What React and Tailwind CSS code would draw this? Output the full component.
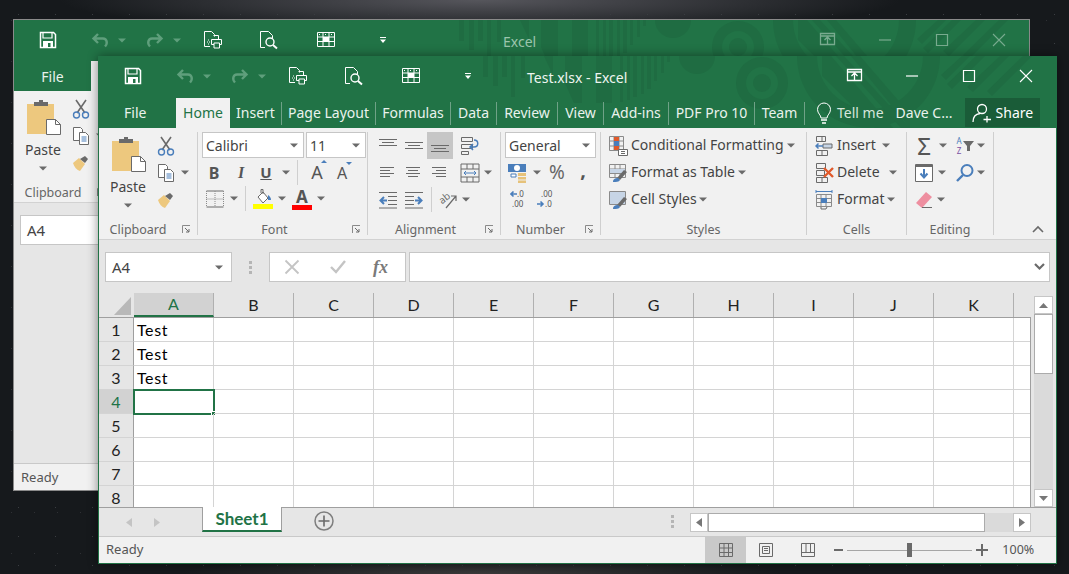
import React from 'react';

const GREEN = '#217346';

function Caret({ color = '#6a6a6a', className = '' }) {
  return (
    <svg width="8" height="5" viewBox="0 0 8 5" className={`shrink-0 ${className}`}>
      <path d="M0 0.5h8L4 4.5z" fill={color} />
    </svg>
  );
}

function Sep({ className = '' }) {
  return <div className={`w-px h-[25px] bg-[#cfcfcf] shrink-0 ${className}`} />;
}

function Ico({ w = 20, h = 20, className = '', children }) {
  return (
    <svg width={w} height={h} viewBox={`0 0 ${w} ${h}`} fill="none" className={`shrink-0 ${className}`}>
      {children}
    </svg>
  );
}

/* title bar drawings */
function SaveIcon() {
  return (
    <Ico>
      <path d="M2.5 2.5h13l2 2v13h-15z" stroke="#fff" strokeWidth="1.5" />
      <path d="M5 3v5h9V3" stroke="#fff" strokeWidth="1.2" />
      <path d="M5 11h10v6H5z" fill="#fff" />
      <path d="M10 13h2.5v4H10z" fill={GREEN} />
    </Ico>
  );
}
function UndoIcon({ flip }) {
  return (
    <Ico className={flip ? '-scale-x-100' : ''}>
      <path d="M7 4L2.5 8.5 7 13M3 8.5h9c4 0 5 5 2 8" stroke="#5f9f7c" strokeWidth="2.4" />
    </Ico>
  );
}
function PrintDocIcon() {
  return (
    <Ico>
      <path d="M7 16.5H1.5v-15h7l3 3v2" stroke="#fff" />
      <path d="M10.5 5.5h5v3.5M8.5 9.5h10v5h-10z" stroke="#fff" />
      <path d="M11 13h5.5v5H11z" fill={GREEN} stroke="#fff" />
      <path d="M5 10h1M4 12h1M6 12h1M5 14h1" stroke="#fff" />
    </Ico>
  );
}
function SearchDocIcon() {
  return (
    <Ico>
      <path d="M6 17.5H1.5v-16h8l4 4v3" stroke="#fff" />
      <circle cx="11" cy="12" r="4" stroke="#fff" strokeWidth="1.4" />
      <path d="M14 15l4 3.5" stroke="#fff" strokeWidth="2" />
    </Ico>
  );
}
function TableDotIcon() {
  return (
    <Ico>
      <path d="M1.5 2.5h17v14h-17zM1.5 7h17M1.5 11.5h17M7 2.5v14M13 2.5v14" stroke="#fff" />
      <path d="M7 7h6v4.5H7z" fill="#fff" />
      <path d="M3 4.5h2M9 4.5h2M15 4.5h2" stroke="#fff" strokeDasharray="1 1" />
    </Ico>
  );
}
function CustomizeIcon() {
  return (
    <svg width="8" height="8" viewBox="0 0 8 8" className="shrink-0">
      <path d="M1 1h6M1 3.5h6L4 7z" stroke="none" fill="#fff" />
      <path d="M1 1.5h6" stroke="#fff" />
    </svg>
  );
}

function Pattern({ className }) {
  const bars = [
    [483, 5, 77], [493, 5, 86], [502, 5, 77], [511, 4, 97], [521, 4, 78],
    [620, 3, 102], [627, 3, 100], [633, 4, 97], [641, 3, 94], [647, 4, 89], [654, 3, 81], [661, 3, 73], [667, 3, 62],
  ];
  return (
    <svg viewBox="470 56 580 72" width="580" height="72" className={`absolute top-0 ${className}`} fill="#1f6c42">
      {bars.map(([x, w, y]) => <rect key={x} x={x} y="56" width={w} height={y - 56} />)}
      <path d="M544 56h9v19zM565 56h17v47h-8l-9-20zM596 56h16v47h-16z" />
      <path d="M679 56a18 18 0 0 0 36 0z" />
      <path fillRule="evenodd" d="M736 83a26 26 0 1 1 52 0a26 26 0 1 1-52 0zM746 83a16 16 0 1 0 32 0a16 16 0 1 0-32 0zM753 83a9 9 0 1 1 18 0a9 9 0 1 1-18 0z" />
      <path d="M797 56a71 71 0 0 0 143 0h-17a53 53 0 0 1-106 0z" />
      <path d="M822 56h9l62 72h-18l-53-52zM836 56h8l66 72h-9zM851 56h9l50 58v14z" />
      <path d="M962 56h8l-24 24-5-5zM976 56h9l-33 33-5-5zM1000 56h9l-36 36-6-5zM1023 56h9l-40 40-5-5z" />
    </svg>
  );
}

function TitleBar({ title, titleClass, dim }) {
  const strokeColor = dim ? '#79ab8f' : '#fff';
  return (
    <div className="relative flex items-center h-[38px] pl-[24px] pr-[20px] pt-[2px]">
      <SaveIcon />
      <div className="ml-[33px]"><UndoIcon /></div>
      <Caret color="#5f9f7c" className="ml-[7px]" />
      <div className="ml-[18px]"><UndoIcon flip /></div>
      <Caret color="#5f9f7c" className="ml-[9px]" />
      <div className="ml-[22px]"><PrintDocIcon /></div>
      <div className="ml-[36px]"><SearchDocIcon /></div>
      <div className="ml-[37px]"><TableDotIcon /></div>
      <div className="ml-[43px]"><CustomizeIcon /></div>
      <div className={`mt-[4px] text-[14px] leading-none ${dim ? 'text-[#9cc5ad]' : 'text-[#eef5f0]'} ${titleClass}`}>{title}</div>
      <div className="ml-auto flex items-center">
        <Ico>
          <path d="M3.5 3.5h14v11h-14zM3.5 6h14M10.5 14V7.5M7.5 10l3-3 3 3" stroke={strokeColor} strokeWidth="1.3" />
        </Ico>
        <Ico className="ml-[38px]"><path d="M4 10h12" stroke={strokeColor} strokeWidth="1.2" /></Ico>
        <Ico className="ml-[37px]"><path d="M4.5 4.5h11v11h-11z" stroke={strokeColor} strokeWidth="1.2" /></Ico>
        <Ico className="ml-[37px]"><path d="M4 4l12 12M16 4L4 16" stroke={strokeColor} strokeWidth="1.1" /></Ico>
      </div>
    </div>
  );
}

function PasteIcon() {
  return (
    <Ico w={36} h={36}>
      <path d="M1 4h27v30H1z" fill="#edc87e" />
      <path d="M8 2h5V0h4v2h5v4H8z" fill="#6a6a6a" />
      <path d="M20.5 19.5h9l5 5v10h-14z" fill="#fff" stroke="#6a6a6a" />
      <path d="M29.5 19.5v5h5" stroke="#6a6a6a" />
    </Ico>
  );
}
function CutIcon() {
  return (
    <Ico w={18} h={20}>
      <path d="M4 1l9 13M14 1L5 14" stroke="#6a6a6a" strokeWidth="1.6" />
      <circle cx="4.5" cy="16" r="3" stroke="#4a7ebb" strokeWidth="1.4" />
      <circle cx="13.5" cy="16" r="3" stroke="#4a7ebb" strokeWidth="1.4" />
    </Ico>
  );
}
function CopyIcon() {
  return (
    <Ico w={18} h={20}>
      <path d="M1.5 1.5h7l2 2v11h-9z" fill="#fff" stroke="#6a6a6a" />
      <path d="M7.5 6.5h6l3 3v9h-9z" fill="#fff" stroke="#6a6a6a" />
      <path d="M9.5 11h5M9.5 13h5M9.5 15h5" stroke="#4a7ebb" />
    </Ico>
  );
}
function PainterIcon() {
  return (
    <Ico w={18} h={18}>
      <path d="M1 9l6-5 6 6-5 7C5 16 2 13 1 9z" fill="#edc87e" />
      <path d="M8 5l5-3 3 3-3 4z" fill="#6a6a6a" />
    </Ico>
  );
}
function BordersIcon() {
  return (
    <Ico w={18} h={18}>
      <path d="M0.5 1h17M0.5 17h17" stroke="#6a6a6a" />
      <path d="M0.5 1v16M17.5 1v16M9 1v16M0.5 9h17" stroke="#8a8a8a" strokeDasharray="1 1" />
    </Ico>
  );
}
function FillIcon() {
  return (
    <Ico h={22}>
      <path d="M5 9l5-5 5 6-5 5z" fill="#fff" stroke="#6a6a6a" />
      <path d="M8 5V1.5h2V6" stroke="#6a6a6a" />
      <path d="M15 7c2 1 3 3 3 5h-3z" fill="#4a7ebb" />
      <path d="M0 16h20v5H0z" fill="#ffff00" />
    </Ico>
  );
}
function Lines({ rows }) {
  return (
    <Ico w={18} h={16}>
      {rows.map(([a, b, y]) => <path key={y} d={`M${a} ${y + 0.5}H${b}`} stroke="#6a6a6a" />)}
    </Ico>
  );
}
const alignTop = [[0, 18, 1], [3, 15, 4], [0, 18, 7]];
const alignMid = [[0, 18, 4], [3, 15, 7], [0, 18, 10]];
const alignBot = [[0, 18, 7], [3, 15, 10], [0, 18, 13]];
const alignL = [[1, 15, 2], [1, 11, 5], [1, 15, 8], [1, 11, 11]];
const alignC = [[1, 15, 2], [3, 13, 5], [1, 15, 8], [3, 13, 11]];
const alignR = [[1, 15, 2], [5, 15, 5], [1, 15, 8], [5, 15, 11]];

function Indent({ flip }) {
  return (
    <Ico w={18} h={18} className={flip ? '-scale-x-100' : ''}>
      <path d="M0 1.5h18M9 5.5h9M9 9.5h9M9 13.5h9M0 17h18" stroke="#6a6a6a" />
      <path d="M8 9.5H2M5 6L1.5 9.5 5 13" stroke="#4a7ebb" strokeWidth="2" />
    </Ico>
  );
}
function WrapIcon() {
  return (
    <Ico h={20}>
      <path d="M1.5 1.5h11v4h-11zM1.5 8.5h11v4h-11zM1.5 15.5h7v3h-7z" stroke="#6a6a6a" />
      <path d="M14 4c5 0 5 7 0 7h-3M13 8l-3 3 3 3" stroke="#4a7ebb" strokeWidth="1.5" />
    </Ico>
  );
}
function MergeIcon() {
  return (
    <Ico h={20}>
      <path d="M1 1h18v18H1zM1 6h18M1 14h18M7 1v5M13 1v5M7 14v5M13 14v5" stroke="#6a6a6a" />
      <path d="M4 10h12M6 8l-2 2 2 2M14 8l2 2-2 2" stroke="#4a7ebb" />
    </Ico>
  );
}
function OrientIcon() {
  return (
    <Ico h={20} className="overflow-visible">
      <path d="M8 18L18 6M13 6h5v5" stroke="#6a6a6a" strokeWidth="1.2" />
      <text x="1" y="12" fontSize="10" fill="#6a6a6a" transform="rotate(-38 6 9)" fontFamily="Noto Sans">ab</text>
    </Ico>
  );
}
function CurrencyIcon() {
  return (
    <Ico h={20}>
      <path d="M0 1h18v8H0z" fill="#4a7ebb" />
      <circle cx="9" cy="5" r="3" fill="#fff" />
      <path d="M3 11h5v3H3z" fill="#fff" stroke="#4a7ebb" />
      <path d="M10 10h8v3h-8zM10 14h8v2.5h-8zM10 17.5h8V20h-8z" fill="#e6c27a" />
    </Ico>
  );
}
function DecimalIcon({ top, bottom, dir }) {
  return (
    <Ico w={18} h={20}>
      <text x={dir === 'l' ? 7 : 5} y="8" fontSize="8" fill="#555" fontFamily="Noto Sans">{top}</text>
      <text x={dir === 'l' ? 2 : 9} y="18" fontSize="8" fill="#555" fontFamily="Noto Sans">{bottom}</text>
      {dir === 'l'
        ? <path d="M7 5H1M3.5 2.5L1 5l2.5 2.5" stroke="#4a7ebb" strokeWidth="1.6" />
        : <path d="M1 15h6M4.5 12.5L7 15l-2.5 2.5" stroke="#4a7ebb" strokeWidth="1.6" />}
    </Ico>
  );
}
function CondIcon() {
  return (
    <Ico w={19} h={20}>
      <path d="M0.5 0.5h14v14h-14zM0.5 5h14M0.5 10h14M5 0.5v14M10 0.5v14" stroke="#8a8a8a" />
      <path d="M5 1h5v4H5z" fill="#e0592a" />
      <path d="M5 5h5v5H5z" fill="#4a7ebb" />
      <path d="M5 10h5v4H5z" fill="#e0592a" />
      <path d="M9.5 13.5h9v6h-9z" fill="#fff" stroke="#6a6a6a" />
      <path d="M12 15.5h4M12 17.5h4" stroke="#6a6a6a" />
    </Ico>
  );
}
function TableStyleIcon({ plain }) {
  return (
    <Ico w={19} h={20}>
      <path d="M0.5 1.5h16v13H0.5zM0.5 6h16M0.5 10.5h16M6 1.5v13M11 1.5v13" stroke="#8a8a8a" />
      {plain ? <path d="M1 2h15v12H1z" fill="#c7d5e6" /> : <path d="M1 6h15v4H1z" fill="#c7d5e6" />}
      <path d="M8 15l7-8 3 2-7 8z" fill="#6a6a6a" />
      <path d="M4 19c0-3 2-4 5-4l2 2c-1 2-4 2-7 2z" fill="#4a7ebb" />
    </Ico>
  );
}
function CellInsert() {
  return (
    <Ico w={18} h={20}>
      <path d="M1.5 0.5h9v5h-9zM7 5.5V0.5M1.5 14.5h11v5h-11zM7 14.5v5" stroke="#6a6a6a" />
      <path d="M8 8h9v4H8z" fill="#c7d5e6" stroke="#6a6a6a" />
      <path d="M8 10H1M3.5 7.5L1 10l2.5 2.5" stroke="#4a7ebb" strokeWidth="1.5" />
    </Ico>
  );
}
function CellDelete() {
  return (
    <Ico w={19} h={20}>
      <path d="M1.5 0.5h9v5h-9zM1.5 14.5h11v5h-11zM7 14.5v5M1.5 7.5h8v5h-8z" stroke="#6a6a6a" />
      <path d="M9 5l9 9M18 5l-9 9" stroke="#e0592a" strokeWidth="2.4" />
    </Ico>
  );
}
function CellFormat() {
  return (
    <Ico w={18} h={20}>
      <path d="M1 1.5h16M1 0v3M17 0v3" stroke="#4a7ebb" />
      <path d="M1.5 4.5h15v12h-15zM1.5 8.5h15M1.5 12.5h15M6 4.5v12M11 4.5v12" stroke="#8a8a8a" />
      <path d="M6 8h6v5H6z" fill="#4a7ebb" />
      <path d="M6 17v2h5M12 17l-1 2" stroke="#6a6a6a" />
    </Ico>
  );
}
function SortIcon() {
  return (
    <div className="flex items-center w-[20px] h-[20px]">
      <div className="flex flex-col items-center w-[8px] text-[8px] leading-[10px]">
        <span className="text-[#4a7ebb]">A</span>
        <span className="text-[#7b4ea3]">Z</span>
      </div>
      <Ico w={12} h={12}><path d="M0 1h11L7 6v5H4V6z" fill="#6a6a6a" /></Ico>
    </div>
  );
}
function FillDownIcon() {
  return (
    <Ico w={18} h={20}>
      <path d="M0.5 1.5h17v17H0.5z" fill="#fff" stroke="#6a6a6a" />
      <path d="M0.5 3h17" stroke="#6a6a6a" strokeWidth="2" />
      <path d="M9 6v8M5.5 10.5L9 14.5l3.5-4" stroke="#4a7ebb" strokeWidth="2" />
    </Ico>
  );
}
function FindIcon() {
  return (
    <Ico h={20}>
      <circle cx="12" cy="7.5" r="5.5" stroke="#4a7ebb" strokeWidth="2" />
      <path d="M8 12l-6 6" stroke="#4a7ebb" strokeWidth="2.4" />
    </Ico>
  );
}
function EraserIcon() {
  return (
    <Ico w={18} h={20}>
      <path d="M1 13l10-11 6 5-10 11z" fill="#ee8fa0" />
      <path d="M7 17.5h10" stroke="#6a6a6a" />
    </Ico>
  );
}

function Group({ label, launcher, labelClass = '', className, children }) {
  return (
    <div className={`flex flex-col h-[103px] border-r border-[#cfcfcf] shrink-0 ${className}`}>
      <div className="h-[81px]">{children}</div>
      <div className="relative mt-auto -mb-[3px] h-[16px] text-[12.5px] leading-[16px] text-[#666] text-center">
        <span className={labelClass}>{label}</span>
        {launcher && (
          <svg width="9" height="9" viewBox="0 0 9 9" className="absolute right-[6px] top-[3px]">
            <path d="M0.5 8V0.5H8" stroke="#8a8a8a" fill="none" />
            <path d="M3 3l4 4M7 4v3H4" stroke="#6a6a6a" fill="none" />
          </svg>
        )}
      </div>
    </div>
  );
}

function Row({ className = '', children }) {
  return <div className={`flex items-center h-[27px] ${className}`}>{children}</div>;
}

function Combo({ className, text, textClass = '' }) {
  return (
    <div className={`flex items-center justify-between h-[26px] bg-white border border-[#c6c6c6] pl-[3px] pr-[5px] text-[14px] text-[#444] ${className}`}>
      <span className={textClass}>{text}</span>
      <Caret />
    </div>
  );
}

function ClipboardGroup() {
  return (
    <Group label="Clipboard" launcher className="w-[99px]" labelClass="-ml-[20px] inline-block">
      <div className="flex">
        <div className="w-[58px] flex flex-col items-center pt-[5px] text-[14px] text-[#444]">
          <div className="ml-[1px]"><PasteIcon /></div>
          <div className="mt-[4px] leading-[20px]">Paste</div>
          <Caret className="mt-[6px]" />
        </div>
        <div>
          <Row><CutIcon /></Row>
          <Row><CopyIcon /><Caret className="ml-[6px]" /></Row>
          <Row><PainterIcon /></Row>
        </div>
      </div>
    </Group>
  );
}

function Ribbon() {
  return (
    <div className="flex h-[112px] pt-[4px] bg-[#f1f1f1] border-b border-[#d2d2d2]">
      <ClipboardGroup />

      <Group label="Font" launcher className="w-[170px]" labelClass="-ml-[16px] inline-block">
        <div className="flex pl-[4px] gap-[2px]">
          <Combo className="w-[102px]" text="Calibri" />
          <Combo className="w-[60px]" text="11" />
        </div>
        <Row className="pl-[6px] mt-[1px] text-[#555]">
          <span className="w-[20px] text-center font-bold text-[16px]">B</span>
          <span className="ml-[7px] w-[20px] text-center font-bold italic text-[16px] font-['Liberation_Serif',serif]">I</span>
          <span className="ml-[5px] w-[20px] text-center font-bold text-[15px] underline">U</span>
          <Caret className="ml-[6px]" />
          <Sep className="ml-[7px]" />
          <span className="ml-[9px] w-[20px] text-center text-[18px] relative">A<span className="absolute top-[1px] right-0 w-0 h-0 border-x-[3px] border-x-transparent border-b-[3px] border-b-[#4a7ebb]" /></span>
          <span className="ml-[5px] w-[20px] text-center text-[16px] relative">A<span className="absolute top-[1px] right-0 w-0 h-0 border-x-[3px] border-x-transparent border-t-[3px] border-t-[#4a7ebb]" /></span>
        </Row>
        <Row className="pl-[8px] -mt-[1px]">
          <BordersIcon />
          <Caret className="ml-[6px]" />
          <Sep className="ml-[7px]" />
          <div className="ml-[7px]"><FillIcon /></div>
          <Caret className="ml-[5px]" />
          <div className="ml-[6px] w-[20px] flex flex-col items-center">
            <span className="font-bold text-[17px] leading-[17px] text-[#555]">A</span>
            <span className="w-full h-[5px] bg-[#ff0000]" />
          </div>
          <Caret className="ml-[5px]" />
        </Row>
      </Group>

      <Group label="Alignment" launcher className="w-[133px]" labelClass="-ml-[17px] inline-block">
        <Row className="pl-[7px]">
          <div className="w-[26px] flex justify-center"><Lines rows={alignTop} /></div>
          <div className="w-[26px] flex justify-center"><Lines rows={alignMid} /></div>
          <div className="w-[26px] h-[27px] flex items-center justify-center bg-[#c6c6c6]"><Lines rows={alignBot} /></div>
          <div className="ml-[7px]"><WrapIcon /></div>
        </Row>
        <Row className="pl-[7px]">
          <div className="w-[26px] flex justify-center"><Lines rows={alignL} /></div>
          <div className="w-[26px] flex justify-center"><Lines rows={alignC} /></div>
          <div className="w-[26px] flex justify-center"><Lines rows={alignR} /></div>
          <div className="ml-[7px]"><MergeIcon /></div>
          <Caret className="ml-[4px]" />
        </Row>
        <Row className="pl-[7px]">
          <div className="w-[26px] flex justify-center"><Indent /></div>
          <div className="w-[26px] flex justify-center"><Indent flip /></div>
          <Sep className="ml-[4px]" />
          <div className="ml-[6px]"><OrientIcon /></div>
          <Caret className="ml-[4px]" />
        </Row>
      </Group>

      <Group label="Number" launcher className="w-[100px]" labelClass="-ml-[20px] inline-block">
        <div className="pl-[4px]"><Combo className="w-[91px]" text="General" /></div>
        <Row className="pl-[7px] mt-[1px]">
          <CurrencyIcon />
          <Caret className="ml-[5px]" />
          <span className="ml-[6px] w-[20px] text-center text-[19px] text-[#666]">%</span>
          <span className="ml-[6px] w-[20px] h-[20px] text-center text-[20px] font-bold leading-[14px] text-[#555]">,</span>
        </Row>
        <Row className="pl-[9px] -mt-[1px]">
          <DecimalIcon top=".0" bottom=".00" dir="l" />
          <div className="ml-[8px]"><DecimalIcon top=".00" bottom=".0" dir="r" /></div>
        </Row>
      </Group>

      <Group label="Styles" className="w-[206px]">
        <div className="pl-[8px] text-[14px] text-[#444]">
          <Row><CondIcon /><span className="ml-[3px] -mt-[2px]">Conditional Formatting</span><Caret className="ml-[3px]" /></Row>
          <Row><TableStyleIcon /><span className="ml-[3px] -mt-[2px]">Format as Table</span><Caret className="ml-[3px]" /></Row>
          <Row><TableStyleIcon plain /><span className="ml-[3px] -mt-[2px]">Cell Styles</span><Caret className="ml-[2px]" /></Row>
        </div>
      </Group>

      <Group label="Cells" className="w-[100px]">
        <div className="pl-[8px] text-[14px] text-[#444]">
          <Row><CellInsert /><span className="ml-[4px] -mt-[2px] w-[45px]">Insert</span><Caret /></Row>
          <Row><CellDelete /><span className="ml-[3px] -mt-[2px] w-[52px]">Delete</span><Caret /></Row>
          <Row><CellFormat /><span className="ml-[4px] -mt-[2px] w-[50px]">Format</span><Caret /></Row>
        </div>
      </Group>

      <Group label="Editing" className="w-[87px]">
        <div className="pl-[8px]">
          <Row>
            <span className="w-[18px] text-center text-[24px] leading-none text-[#555]">Σ</span>
            <Caret className="ml-[6px]" />
            <div className="ml-[8px]"><SortIcon /></div>
            <Caret className="ml-[2px]" />
          </Row>
          <Row>
            <FillDownIcon />
            <Caret className="ml-[5px]" />
            <div className="ml-[9px]"><FindIcon /></div>
            <Caret className="ml-[2px]" />
          </Row>
          <Row>
            <EraserIcon />
            <Caret className="ml-[4px]" />
          </Row>
        </div>
      </Group>

      <div className="flex-1 flex items-end justify-end pr-[12px] pb-[6px]">
        <svg width="12" height="8" viewBox="0 0 12 8"><path d="M1 7l5-5 5 5" stroke="#6a6a6a" strokeWidth="1.6" fill="none" /></svg>
      </div>
    </div>
  );
}

function FormulaBar() {
  return (
    <div className="flex items-start h-[53px] pt-[12px] pl-[6px] bg-[#e6e6e6]">
      <div className="flex items-center justify-between w-[127px] h-[30px] bg-white border border-[#c6c6c6] pl-[6px] pr-[8px] text-[15px] text-[#444]">
        <span>A4</span><Caret />
      </div>
      <div className="w-[37px] h-[30px] flex flex-col items-center justify-center gap-[2px]">
        <span className="w-[3px] h-[3px] bg-[#b5b5b5]" />
        <span className="w-[3px] h-[3px] bg-[#b5b5b5]" />
        <span className="w-[3px] h-[3px] bg-[#b5b5b5]" />
      </div>
      <div className="flex items-center w-[137px] h-[30px] bg-white border border-[#c6c6c6] pl-[14px]">
        <Ico w={16} h={16}><path d="M1.5 1.5l13 13M14.5 1.5l-13 13" stroke="#c4c4c4" strokeWidth="1.8" /></Ico>
        <Ico w={18} h={16} className="ml-[29px]"><path d="M2 8l5 5L16 2" stroke="#c4c4c4" strokeWidth="2.4" /></Ico>
        <span className="ml-[26px] text-[18px] italic font-bold leading-none text-[#7a7a7a] font-['Liberation_Serif',serif]">fx</span>
      </div>
      <div className="flex items-center justify-end w-[641px] h-[30px] ml-[3px] bg-white border border-[#c6c6c6] pr-[4px]">
        <svg width="11" height="8" viewBox="0 0 11 8"><path d="M1 1l4.5 4.5L10 1" stroke="#6a6a6a" strokeWidth="2.2" fill="none" /></svg>
      </div>
    </div>
  );
}

const COLS = ['A', 'B', 'C', 'D', 'E', 'F', 'G', 'H', 'I', 'J', 'K'];
const ROWS = [1, 2, 3, 4, 5, 6, 7, 8];

function Sheet() {
  return (
    <div className="flex h-[214px] bg-[#e6e6e6] font-['Lato',sans-serif]">
      <div className="w-[932px] shrink-0 overflow-hidden">
        <div className="flex h-[25px] border-b border-[#9f9f9f]">
          <div className="w-[35px] flex items-end justify-end pb-[2px] pr-[3px]">
            <svg width="17" height="18" viewBox="0 0 17 18"><path d="M0 18L17 0v18z" fill="#b8b8b8" /></svg>
          </div>
          {COLS.map(c => (
            <div key={c} className={`w-[80px] flex items-center justify-center text-[16px] border-r border-[#b0b0b0] ${c === 'A' ? 'bg-[#d2d2d2] text-[#217346] border-b-2 border-b-[#217346]' : 'text-[#222]'}`}>{c}</div>
          ))}
        </div>
        {ROWS.map(r => (
          <div key={r} className="flex h-[24px]">
            <div className={`w-[35px] flex items-center justify-center text-[16px] border-r border-b border-r-[#9f9f9f] border-b-[#d4d4d4] ${r === 4 ? 'bg-[#d2d2d2] text-[#217346]' : 'text-[#222]'}`}>{r}</div>
            <div className="flex flex-1 bg-white border-r border-[#9f9f9f]">
              {COLS.map(c => (
                <div key={c} className="relative w-[80px] shrink-0 border-r border-b border-[#d4d4d4] pl-[3px] text-[16px] tracking-[0.6px] leading-[23px] text-black">
                  {c === 'A' && r <= 3 ? 'Test' : ''}
                  {c === 'A' && r === 4 && (
                    <div className="absolute -left-px -top-px w-[82px] h-[26px] border-2 border-[#217346]">
                      <span className="absolute -right-[3px] -bottom-[3px] w-[5px] h-[5px] bg-[#217346] border border-white" />
                    </div>
                  )}
                </div>
              ))}
              <div className="flex-1 border-b border-[#d4d4d4]" />
            </div>
          </div>
        ))}
      </div>
      <div className="flex flex-col w-[19px] ml-[3px] mt-[3px]">
        <div className="h-[18px] flex items-center justify-center bg-white border border-[#c6c6c6]">
          <svg width="9" height="5" viewBox="0 0 9 5"><path d="M4.5 0L9 5H0z" fill="#777" /></svg>
        </div>
        <div className="h-[60px] bg-white border border-[#ababab]" />
        <div className="flex-1 bg-[#dadada]" />
        <div className="h-[18px] flex items-center justify-center bg-white border border-[#c6c6c6]">
          <svg width="9" height="5" viewBox="0 0 9 5"><path d="M0 0h9L4.500 5z" fill="#777" /></svg>
        </div>
      </div>
    </div>
  );
}

function SheetTabs() {
  return (
    <div className="flex h-[29px] bg-[#e6e6e6] border-t border-[#9f9f9f]">
      <div className="w-[103px] flex items-center pl-[27px] gap-[22px]">
        <svg width="6" height="9" viewBox="0 0 6 9"><path d="M6 0v9L0 4.5z" fill="#c4c4c4" /></svg>
        <svg width="6" height="9" viewBox="0 0 6 9"><path d="M0 0v9l6-4.5z" fill="#c4c4c4" /></svg>
      </div>
      <div className="w-[80px] h-[25px] -mt-px flex items-center justify-center bg-white border-x border-[#9f9f9f] border-b-2 border-b-[#217346] text-[17px] font-bold text-[#217346] font-['Lato',sans-serif]">Sheet1</div>
      <svg width="20" height="20" viewBox="0 0 20 20" fill="none" className="ml-[32px] mt-[3px]">
        <circle cx="10" cy="10" r="9" stroke="#7f7f7f" strokeWidth="1.5" />
        <path d="M10 4.5v11M4.5 10h11" stroke="#6a6a6a" strokeWidth="1.6" />
      </svg>
      <div className="ml-[329px] w-[18px] flex flex-col items-center justify-center gap-[2px] h-[26px]">
        <span className="w-[3px] h-[3px] bg-[#b5b5b5]" />
        <span className="w-[3px] h-[3px] bg-[#b5b5b5]" />
        <span className="w-[3px] h-[3px] bg-[#b5b5b5]" />
      </div>
      <div className="flex w-[341px] h-[19px] mt-[5px] ml-[9px] bg-[#dadada]">
        <div className="w-[18px] flex items-center justify-center bg-white border border-[#c6c6c6]">
          <svg width="6" height="9" viewBox="0 0 6 9"><path d="M6 0v9L0 4.5z" fill="#777" /></svg>
        </div>
        <div className="w-[277px] bg-white border border-[#ababab]" />
        <div className="w-[28px]" />
        <div className="w-[18px] flex items-center justify-center bg-white border border-[#c6c6c6]">
          <svg width="6" height="9" viewBox="0 0 6 9"><path d="M0 0v9l6-4.500z" fill="#777" /></svg>
        </div>
      </div>
    </div>
  );
}

function StatusBar() {
  return (
    <div className="flex items-center h-[27px] bg-[#f1f1f1] border-t border-[#c9c9c9] pl-[7px] text-[13px] text-[#555]">
      <span>Ready</span>
      <div className="ml-[562px] w-[41px] h-[26px] flex items-center justify-center bg-[#c9c9c9]">
        <Ico w={14} h={14}><path d="M0.5 0.5h13v13h-13zM0.5 5h13M0.5 9.500h13M5 0.5v13M9.500 0.5v13" stroke="#6a6a6a" /></Ico>
      </div>
      <Ico w={14} h={14} className="ml-[13px]"><path d="M0.5 0.5h13v13h-13zM3.500 3.500h7v7h-7zM5 5.500h4M5 7.500h4" stroke="#6a6a6a" /></Ico>
      <Ico w={14} h={14} className="ml-[28px]"><path d="M0.5 13.500v-13h13v13zM0.5 9.500h13M5 0.5v9M9.500 0.5v9" stroke="#6a6a6a" /></Ico>
      <span className="ml-[19px] w-[9px] h-[2px] bg-[#6a6a6a]" />
      <div className="relative ml-[4px] w-[125px] h-px bg-[#a6a6a6]">
        <span className="absolute left-[60px] -top-[7px] w-[5px] h-[14px] bg-[#6a6a6a]" />
      </div>
      <Ico w={12} h={12} className="ml-[4px]"><path d="M0 6h12M6 0v12" stroke="#6a6a6a" strokeWidth="2" /></Ico>
      <span className="ml-[14px] text-[12.5px]">100%</span>
    </div>
  );
}

function FrontWindow() {
  const tabs = [
    ['Insert', 'w-[52px]'], ['Page Layout', 'w-[94px]'], ['Formulas', 'w-[75px]'], ['Data', 'w-[46px]'],
    ['Review', 'w-[61px]'], ['View', 'w-[46px]'], ['Add-ins', 'w-[65px]'], ['PDF Pro 10', 'w-[86px]'], ['Team', 'w-[50px]'],
  ];
  return (
    <div className="absolute left-[98px] top-[56px] w-[959px] flex flex-col border-x border-b border-[#217346] shadow-[0_0_10px_rgba(0,0,0,0.45)]">
      <div className="relative bg-[#217346] overflow-hidden">
        <Pattern className="left-[371px]" />
        <TitleBar title="Test.xlsx - Excel" titleClass="ml-[55px]" />
        <div className="relative flex items-end h-[34px] text-[14px] text-[#eaf2ed]">
          <div className="w-[77px] h-[30px] leading-[30px] pl-[25px]">File</div>
          <div className="w-[54px] h-[30px] leading-[30px] text-center bg-[#f1f1f1] text-[#217346]">Home</div>
          {tabs.map(([t, w]) => (
            <div key={t} className={`${w} h-[30px] flex items-center justify-center`}>
              <span className="flex-1 text-center leading-[30px]">{t}</span>
              <span className="w-px h-[23px] bg-[#6fa287]" />
            </div>
          ))}
          <svg width="16" height="23" viewBox="0 0 16 23" fill="none" className="ml-[11px] mb-[3px]">
            <path d="M5 16c0-3-3.500-4.500-3.500-8.500a6.500 6.500 0 0 1 13 0C14.500 11.500 11 13 11 16z" stroke="#fff" />
            <path d="M5 18h6M6 21h4" stroke="#fff" strokeWidth="1.6" />
          </svg>
          <div className="ml-[5px] h-[30px] leading-[30px] text-[#d6e6dc]">Tell me</div>
          <div className="ml-[12px] w-[69px] h-[30px] leading-[30px]">Dave C...</div>
          <div className="flex items-center w-[75px] h-[29px] mb-px bg-[#1a5c38] text-white pl-[7px]">
            <svg width="21" height="20" viewBox="0 0 21 20" fill="none">
              <circle cx="10" cy="6" r="4.500" stroke="#fff" strokeWidth="1.3" />
              <path d="M1 19c0-5 3-8 7-8.500M15 13v6.500M11.500 16.500h7.500" stroke="#fff" strokeWidth="1.3" />
            </svg>
            <span className="ml-[3px]">Share</span>
          </div>
        </div>
      </div>
      <Ribbon />
      <FormulaBar />
      <Sheet />
      <SheetTabs />
      <StatusBar />
    </div>
  );
}

function BackWindow() {
  return (
    <div className="absolute left-[13px] top-[19px] w-[1017px] h-[472px] flex flex-col border border-[#8a8a8a] bg-[#e6e6e6]">
      <div className="relative bg-[#217346] overflow-hidden">
        <Pattern className="left-[432px]" />
        <TitleBar title="Excel" titleClass="ml-[116px]" dim />
        <div className="relative flex items-end h-[33px] text-[14px] text-[#eaf2ed]">
          <div className="w-[77px] h-[33px] leading-[38px] text-center">File</div>
          <div className="w-[54px] h-[30px] bg-[#f1f1f1]" />
        </div>
      </div>
      <div className="h-[112px] pt-[4px] bg-[#f1f1f1] border-b border-[#d2d2d2]">
        <ClipboardGroup />
      </div>
      <div className="flex-1 pt-[12px] pl-[6px]">
        <div className="w-[127px] h-[30px] flex items-center bg-white border border-[#c6c6c6] pl-[6px] text-[15px] text-[#444]">A4</div>
      </div>
      <div className="h-[27px] flex items-center bg-[#f1f1f1] border-t border-[#c9c9c9] pl-[7px] pt-[2px] text-[13px] text-[#555]">Ready</div>
    </div>
  );
}

export default function App() {
  return (
    <div className="relative w-[1069px] h-[574px] overflow-hidden font-['Noto_Sans',sans-serif] bg-[#15181b] bg-[radial-gradient(circle,#3a3d41_0.6px,transparent_1px),radial-gradient(circle,#2e3034_0.5px,transparent_1px),radial-gradient(ellipse_420px_34px_at_480px_0,#56565c_0,rgba(86,86,92,0)_100%),radial-gradient(ellipse_300px_20px_at_480px_574px,#3a3a3a_0,rgba(58,58,58,0)_100%),linear-gradient(180deg,#16191c,#16191c)] bg-[length:37px_29px,23px_41px,100%_100%,100%_100%,100%_100%]">
      <BackWindow />
      <FrontWindow />
    </div>
  );
}
